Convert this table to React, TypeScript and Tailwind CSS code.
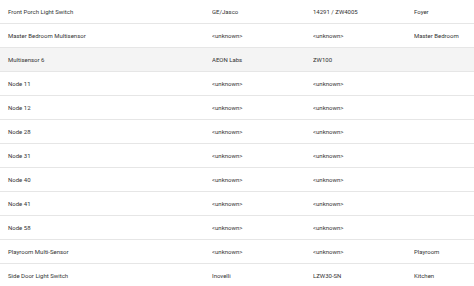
const ROWS = [
  { name: 'Front Porch Light Switch', maker: 'GE/Jasco', model: '14291 / ZW4005', area: 'Foyer' },
  { name: 'Master Bedroom Multisensor', maker: '<unknown>', model: '<unknown>', area: 'Master Bedroom' },
  { name: 'Multisensor 6', maker: 'AEON Labs', model: 'ZW100', area: '', hover: true },
  { name: 'Node 11', maker: '<unknown>', model: '<unknown>', area: '' },
  { name: 'Node 12', maker: '<unknown>', model: '<unknown>', area: '' },
  { name: 'Node 28', maker: '<unknown>', model: '<unknown>', area: '' },
  { name: 'Node 31', maker: '<unknown>', model: '<unknown>', area: '' },
  { name: 'Node 40', maker: '<unknown>', model: '<unknown>', area: '' },
  { name: 'Node 41', maker: '<unknown>', model: '<unknown>', area: '' },
  { name: 'Node 58', maker: '<unknown>', model: '<unknown>', area: '' },
  { name: 'Playroom Multi-Sensor', maker: '<unknown>', model: '<unknown>', area: 'Playroom' },
  { name: 'Side Door Light Switch', maker: 'Inovelli', model: 'LZW30-SN', area: 'Kitchen' },
]

export default function App() {
  return (
    <div className="w-[474px] h-[286px] overflow-hidden bg-white text-[6px] text-[#333] font-['Roboto',sans-serif]">
      {ROWS.map((row) => (
        <div
          key={row.name}
          className={`grid grid-cols-[212px_101px_101px_1fr] items-center h-[24px] border-b border-[#e6e6e6] ${row.hover ? 'bg-[#f4f4f4]' : ''}`}
        >
          <div className="pl-[8px] truncate">{row.name}</div>
          <div className="truncate">{row.maker}</div>
          <div className="truncate">{row.model}</div>
          <div className="truncate">{row.area}</div>
        </div>
      ))}
    </div>
  )
}
